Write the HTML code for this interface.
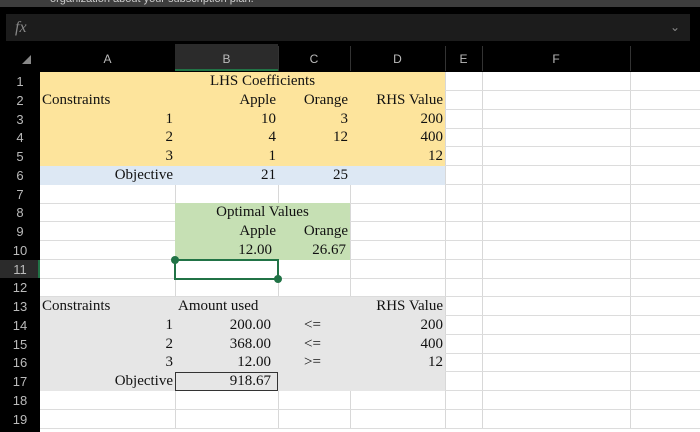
<!DOCTYPE html>
<html><head><meta charset="utf-8"><style>
body{margin:0;width:700px;height:432px;overflow:hidden;background:#000;position:relative;font-family:"Liberation Serif",serif;}
div{position:absolute;box-sizing:border-box;}
.t{font-size:15px;color:#111;height:18.75px;line-height:19px;white-space:nowrap;}
.r{text-align:right}
.rh{left:0;width:40px;height:18.75px;text-align:center;color:#bbb;font:13px "Liberation Sans",sans-serif;line-height:19px}
.ch{top:44px;height:27px;text-align:center;color:#bbb;font:12px "Liberation Sans",sans-serif;line-height:30px}
.vl{top:72px;height:357px;width:1px;background:#d8d8d8}
.hl{left:40px;width:660px;height:1px;background:#dcdcdc}
</style></head><body>
<div style="left:0;top:0;width:700px;height:7px;background:#3d3d3d;overflow:hidden"><div style="left:50px;top:-7px;font:11px 'Liberation Sans',sans-serif;color:#ccc;white-space:nowrap">organization about your subscription plan.</div></div>
<div style="left:6px;top:14px;width:684px;height:27px;background:#1c1c1c"></div>
<div style="left:15px;top:14px;height:27px;font:italic 16px 'Liberation Serif',serif;color:#888;line-height:28px">fx</div>
<div style="left:670px;top:20px;color:#888;font:12px 'Liberation Sans',sans-serif">&#8964;</div>
<div style="left:175px;top:44px;width:103px;height:27px;background:#2b2b2b;border-bottom:2px solid #217346"></div>
<div style="left:22px;top:55px;width:0;height:0;border-left:9px solid transparent;border-bottom:9px solid #888"></div>
<div class="ch" style="left:40px;width:135px">A</div>
<div class="ch" style="left:175px;width:103px">B</div>
<div class="ch" style="left:278px;width:72px">C</div>
<div class="ch" style="left:350px;width:95px">D</div>
<div class="ch" style="left:445px;width:37px">E</div>
<div class="ch" style="left:482px;width:148px">F</div>
<div style="left:278px;top:46px;width:1px;height:25px;background:#333"></div>
<div style="left:350px;top:46px;width:1px;height:25px;background:#333"></div>
<div style="left:445px;top:46px;width:1px;height:25px;background:#333"></div>
<div style="left:482px;top:46px;width:1px;height:25px;background:#333"></div>
<div style="left:630px;top:46px;width:1px;height:25px;background:#333"></div>
<div style="left:40px;top:72px;width:660px;height:360px;background:#fff"></div>
<div class="vl" style="left:175px"></div><div class="vl" style="left:278px"></div><div class="vl" style="left:350px"></div><div class="vl" style="left:445px"></div><div class="vl" style="left:482px"></div><div class="vl" style="left:630px"></div>
<div class="hl" style="top:90px"></div><div class="hl" style="top:109px"></div><div class="hl" style="top:128px"></div><div class="hl" style="top:146px"></div><div class="hl" style="top:165px"></div><div class="hl" style="top:184px"></div><div class="hl" style="top:203px"></div><div class="hl" style="top:221px"></div><div class="hl" style="top:240px"></div><div class="hl" style="top:259px"></div><div class="hl" style="top:278px"></div><div class="hl" style="top:296px"></div><div class="hl" style="top:315px"></div><div class="hl" style="top:334px"></div><div class="hl" style="top:353px"></div><div class="hl" style="top:371px"></div><div class="hl" style="top:390px"></div><div class="hl" style="top:409px"></div><div class="hl" style="top:428px"></div>
<div style="left:40px;top:72px;width:405px;height:93.75px;background:#fde49c"></div>
<div style="left:40px;top:165.75px;width:405px;height:18.75px;background:#dde8f4"></div>
<div style="left:175px;top:203.25px;width:175px;height:56.25px;background:#c6e0b4"></div>
<div style="left:40px;top:297px;width:405px;height:93.75px;background:#e6e6e6"></div>
<div style="left:174px;top:258.5px;width:105px;height:21px;border:2px solid #217346"></div>
<div style="left:171px;top:255.5px;width:8px;height:8px;border-radius:50%;background:#217346"></div>
<div style="left:274px;top:274.5px;width:8px;height:8px;border-radius:50%;background:#217346"></div>
<div style="left:175px;top:372px;width:103px;height:19px;border:1px solid #333"></div>
<div class="rh" style="top:72px">1</div><div class="rh" style="top:90.75px">2</div><div class="rh" style="top:109.5px">3</div><div class="rh" style="top:128.25px">4</div><div class="rh" style="top:147px">5</div><div class="rh" style="top:165.75px">6</div><div class="rh" style="top:184.5px">7</div><div class="rh" style="top:203.25px">8</div><div class="rh" style="top:222px">9</div><div class="rh" style="top:240.75px">10</div>
<div class="rh" style="top:259.5px;background:#2b2b2b">11</div>
<div class="rh" style="top:278.25px">12</div><div class="rh" style="top:297px">13</div><div class="rh" style="top:315.75px">14</div><div class="rh" style="top:334.5px">15</div><div class="rh" style="top:353.25px">16</div><div class="rh" style="top:372px">17</div><div class="rh" style="top:390.75px">18</div><div class="rh" style="top:409.5px">19</div>
<div style="left:38px;top:259.5px;width:2px;height:18.75px;background:#217346"></div>
<div class="t" style="top:72px;left:175px;width:175px;text-align:center">LHS Coefficients</div>
<div class="t" style="top:90.75px;left:42px">Constraints</div>
<div class="t r" style="top:90.75px;left:175px;width:101px">Apple</div>
<div class="t r" style="top:90.75px;left:278px;width:70px">Orange</div>
<div class="t r" style="top:90.75px;left:350px;width:93px">RHS Value</div>
<div class="t r" style="top:109.5px;left:40px;width:133px">1</div><div class="t r" style="top:109.5px;left:175px;width:101px">10</div><div class="t r" style="top:109.5px;left:278px;width:70px">3</div><div class="t r" style="top:109.5px;left:350px;width:93px">200</div>
<div class="t r" style="top:128.25px;left:40px;width:133px">2</div><div class="t r" style="top:128.25px;left:175px;width:101px">4</div><div class="t r" style="top:128.25px;left:278px;width:70px">12</div><div class="t r" style="top:128.25px;left:350px;width:93px">400</div>
<div class="t r" style="top:147px;left:40px;width:133px">3</div><div class="t r" style="top:147px;left:175px;width:101px">1</div><div class="t r" style="top:147px;left:350px;width:93px">12</div>
<div class="t r" style="top:165.75px;left:40px;width:133px">Objective</div><div class="t r" style="top:165.75px;left:175px;width:101px">21</div><div class="t r" style="top:165.75px;left:278px;width:70px">25</div>
<div class="t" style="top:203.25px;left:175px;width:175px;text-align:center">Optimal Values</div>
<div class="t r" style="top:222px;left:175px;width:101px">Apple</div><div class="t r" style="top:222px;left:278px;width:70px">Orange</div>
<div class="t r" style="top:240.75px;left:175px;width:97px">12.00</div><div class="t r" style="top:240.75px;left:278px;width:68px">26.67</div>
<div class="t" style="top:297px;left:42px">Constraints</div>
<div class="t" style="top:297px;left:178px">Amount used</div>
<div class="t r" style="top:297px;left:350px;width:93px">RHS Value</div>
<div class="t r" style="top:315.75px;left:40px;width:133px">1</div><div class="t r" style="top:315.75px;left:175px;width:96px">200.00</div><div class="t" style="top:315.75px;left:304px">&lt;=</div><div class="t r" style="top:315.75px;left:350px;width:93px">200</div>
<div class="t r" style="top:334.5px;left:40px;width:133px">2</div><div class="t r" style="top:334.5px;left:175px;width:96px">368.00</div><div class="t" style="top:334.5px;left:304px">&lt;=</div><div class="t r" style="top:334.5px;left:350px;width:93px">400</div>
<div class="t r" style="top:353.25px;left:40px;width:133px">3</div><div class="t r" style="top:353.25px;left:175px;width:96px">12.00</div><div class="t" style="top:353.25px;left:304px">&gt;=</div><div class="t r" style="top:353.25px;left:350px;width:93px">12</div>
<div class="t r" style="top:372px;left:40px;width:133px">Objective</div><div class="t r" style="top:372px;left:175px;width:96px">918.67</div>
</body></html>
